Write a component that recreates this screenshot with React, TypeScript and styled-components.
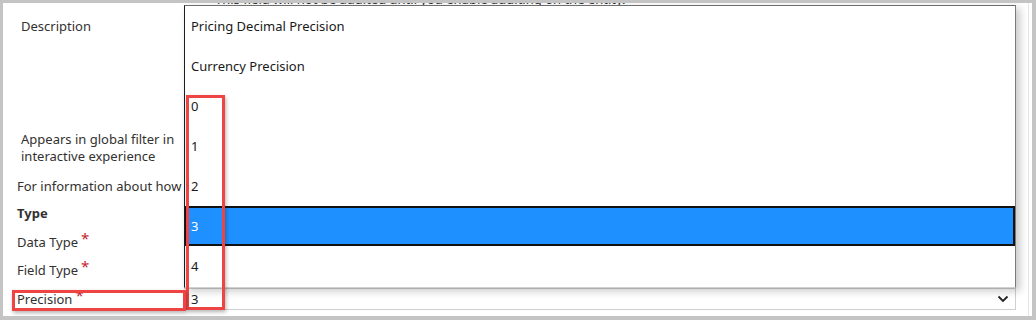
import React from "react";
import styled, { createGlobalStyle } from "styled-components";

const GlobalStyle = createGlobalStyle`
  html, body {
    margin: 0;
    padding: 0;
    background: #ffffff;
  }
  body {
    font-family: "Segoe UI", "Noto Sans", "Liberation Sans", sans-serif;
  }
`;

const options = ["Pricing Decimal Precision", "Currency Precision", "0", "1", "2", "3", "4"];
const selected = "3";

const labels: { text: string; top: number; indent: number; bold?: boolean; required?: boolean; lh?: number }[] = [
  { text: "Description", top: 13, indent: 18 },
  { text: "Appears in global filter in\ninteractive experience", top: 95, indent: 18, lh: 17 },
  { text: "For information about how", top: 11, indent: 14 },
  { text: "Type", top: 7, indent: 14, bold: true },
  { text: "Data Type", top: 9, indent: 14, required: true },
  { text: "Field Type", top: 8, indent: 14, required: true },
  { text: "Precision", top: 9, indent: 14, required: true },
];

const App = () => {
  return (
    <>
      <GlobalStyle />
      <Frame>
        <Form>
          <LabelColumn>
            {labels.map((l) => (
              <Label key={l.text} top={l.top} indent={l.indent} bold={l.bold} lh={l.lh}>
                {l.text}
                {l.required && <Required>*</Required>}
              </Label>
            ))}
          </LabelColumn>
          <FieldColumn>
            <Hint>This field will not be audited until you enable auditing on the entity.</Hint>
            <Select>
              <span>3</span>
              <svg width="12" height="8" viewBox="0 0 12 8">
                <path d="M1.5 1.5 L6 6 L10.5 1.5" fill="none" stroke="#222" strokeWidth="1.8" />
              </svg>
            </Select>
          </FieldColumn>
        </Form>

        <Dropdown>
          {options.map((o) => (
            <Option key={o} active={o === selected}>
              {o}
            </Option>
          ))}
        </Dropdown>

        <Highlight style={{ left: 183, top: 92, width: 39, height: 215 }} />
        <Highlight style={{ left: 9, top: 287, width: 174, height: 21 }} />
      </Frame>
    </>
  );
};

export default App;

const Frame = styled.div`
  position: relative;
  width: 1036px;
  height: 320px;
  box-sizing: border-box;
  border: 3px solid #c4c4c4;
  border-right-width: 4px;
  border-bottom-width: 4px;
  background: #fff;
  overflow: hidden;

  &::after {
    content: "";
    position: absolute;
    top: 0;
    bottom: 0;
    right: 3px;
    width: 1px;
    background: #e6e6e6;
  }
`;

const Form = styled.div`
  display: flex;
  height: 100%;
`;

const LabelColumn = styled.div`
  width: 181px;
  display: flex;
  flex-direction: column;
  flex-shrink: 0;
`;

const Label = styled.div<{ top: number; indent: number; bold?: boolean; lh?: number }>`
  margin-top: ${(p) => p.top}px;
  padding-left: ${(p) => p.indent}px;
  font-size: 13px;
  line-height: ${(p) => p.lh ?? 20}px;
  color: #323130;
  font-weight: ${(p) => (p.bold ? 700 : 400)};
  white-space: pre;
`;

const Required = styled.span`
  color: #c4262e;
  margin-left: 3px;
  font-size: 15px;
  line-height: 10px;
  vertical-align: 3px;
`;

const FieldColumn = styled.div`
  flex: 1;
  display: flex;
  flex-direction: column;
  padding-right: 16px;
`;

const Hint = styled.div`
  margin-top: -12px;
  padding-left: 31px;
  font-size: 13px;
  line-height: 16px;
  color: #333;
  white-space: nowrap;
`;

const Select = styled.div`
  margin-top: auto;
  margin-bottom: 6px;
  height: 22px;
  box-sizing: border-box;
  border: 1px solid #cfcfcf;
  border-left: none;
  display: flex;
  align-items: center;
  justify-content: space-between;
  padding: 0 6px 0 7px;
  font-size: 13px;
  color: #222;
`;

const Dropdown = styled.div`
  position: absolute;
  left: 181px;
  top: 2px;
  width: 832px;
  height: 283px;
  box-sizing: border-box;
  background: #fff;
  border-left: 1.5px solid #1e1e1e;
  border-top: 1.5px solid #6e6e6e;
  border-right: 1px solid #7a7a7a;
  border-bottom: 1px solid #d0d0d0;
  box-shadow: 4px 3px 8px rgba(0, 0, 0, 0.22);
  display: flex;
  flex-direction: column;
`;

const Option = styled.div<{ active?: boolean }>`
  height: 40px;
  flex-shrink: 0;
  box-sizing: border-box;
  display: flex;
  align-items: center;
  padding-left: ${(p) => (p.active ? 4 : 6)}px;
  font-size: 13px;
  color: ${(p) => (p.active ? "#fff" : "#1a1a1a")};
  background: ${(p) => (p.active ? "#1e90ff" : "transparent")};
  border: ${(p) => (p.active ? "2px solid #111" : "none")};
`;

const Highlight = styled.div`
  position: absolute;
  box-sizing: border-box;
  border: 3px solid #ef4444;
  box-shadow: 1px 2px 4px rgba(0, 0, 0, 0.3);
  pointer-events: none;
`;
